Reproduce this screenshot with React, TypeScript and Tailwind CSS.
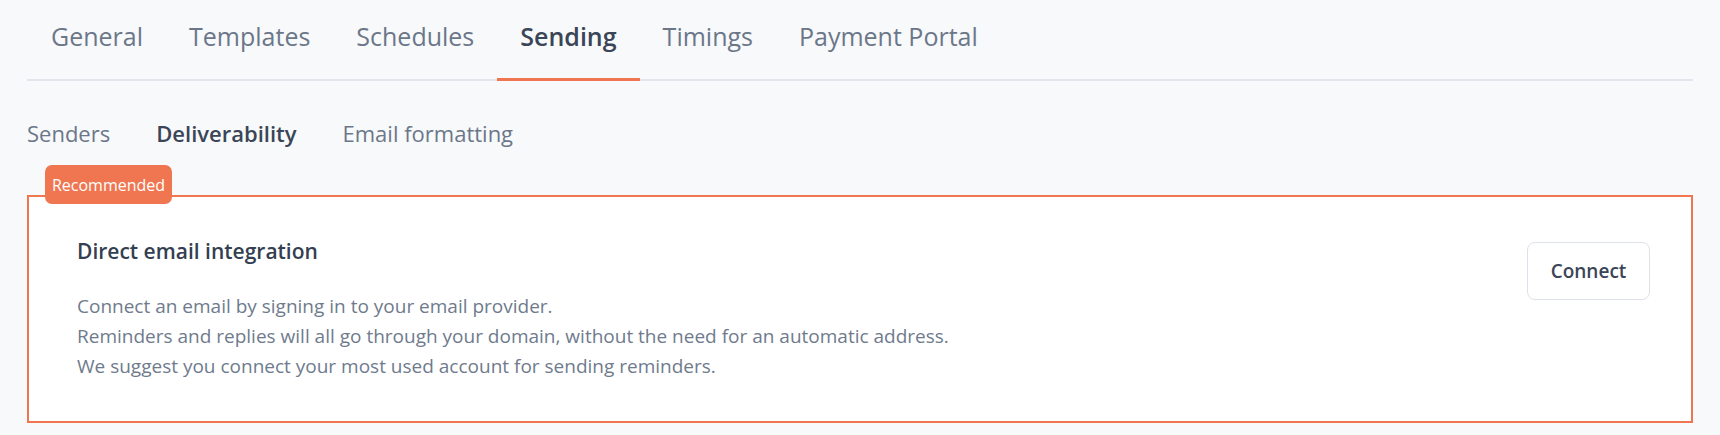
import React, { useState } from 'react';

const mainTabs = ['General', 'Templates', 'Schedules', 'Sending', 'Timings', 'Payment Portal'];
const subTabs = ['Senders', 'Deliverability', 'Email formatting'];

// --- Settings page: Sending / Deliverability ---
const App: React.FC = () => {
  const [activeTab, setActiveTab] = useState('Sending');
  const [activeSub, setActiveSub] = useState('Deliverability');

  return (
    <div className="min-h-screen bg-[#f8f9fb] px-[27px] font-['Open_Sans','Noto_Sans',sans-serif]">
      {/* main tabs */}
      <div className="flex border-b-2 border-[#e2e6ec] pl-[1px]">
        {mainTabs.map((tab) => (
          <button
            key={tab}
            onClick={() => setActiveTab(tab)}
            className={
              tab === activeTab
                ? '-mb-[2px] border-b-[3px] border-[#ef7650] px-[23px] pt-[20px] pb-[26px] text-[25px] leading-[32px] font-semibold text-[#3a4557]'
                : '-mb-[2px] border-b-[3px] border-transparent px-[23px] pt-[20px] pb-[26px] text-[25px] leading-[32px] text-[#6b7789]'
            }
          >
            {tab}
          </button>
        ))}
      </div>

      {/* sub tabs */}
      <div className="mt-[38px] flex gap-[46px]">
        {subTabs.map((tab) => (
          <button
            key={tab}
            onClick={() => setActiveSub(tab)}
            className={
              tab === activeSub
                ? 'text-[22px] leading-[28px] font-semibold text-[#3a4557]'
                : 'text-[22px] leading-[28px] text-[#6b7789]'
            }
          >
            {tab}
          </button>
        ))}
      </div>

      {/* recommended card */}
      <div className="relative mt-[48px] flex items-start justify-between border-2 border-[#ef7650] bg-white pt-[40px] pb-[40px] pl-[48px] pr-[41px]">
        <span className="absolute left-[16px] top-[-32px] flex h-[39px] w-[127px] items-center justify-center rounded-[7px] bg-[#ef7650] text-[16px] text-white">
          Recommended
        </span>
        <div>
          <h3 className="text-[21px] leading-[28px] font-semibold text-[#343f51]">Direct email integration</h3>
          <div className="mt-[26px] text-[19px] leading-[30px] text-[#6f7b8d]">
            <p>Connect an email by signing in to your email provider.</p>
            <p>Reminders and replies will all go through your domain, without the need for an automatic address.</p>
            <p>We suggest you connect your most used account for sending reminders.</p>
          </div>
        </div>
        <button className="mt-[5px] flex h-[58px] w-[123px] items-center justify-center rounded-[8px] border border-[#dde2ea] bg-white text-[19px] font-semibold text-[#3a4557]">
          Connect
        </button>
      </div>
    </div>
  );
};

export default App;
